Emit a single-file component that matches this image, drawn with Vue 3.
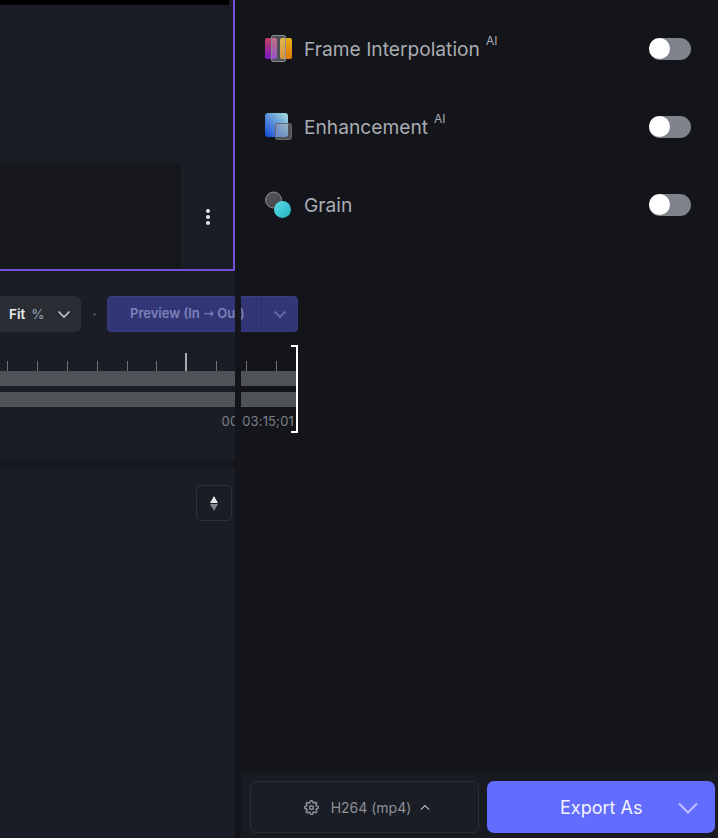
<script setup>
const ticks = [7, 37, 67, 97, 127, 156, 185, 216, 246, 276]
const rows = [
  { id: 'frame', label: 'Frame Interpolation', ai: true },
  { id: 'enh', label: 'Enhancement', ai: true },
  { id: 'grain', label: 'Grain', ai: false }
]
</script>

<template>
  <div class="app">
    <section class="left">
      <div class="viewer">
        <div class="black-bar"></div>
        <div class="dark-box"></div>
        <div class="dots"><i></i><i></i><i></i></div>
      </div>
      <div class="toolbar">
        <div class="fit"><b>Fit</b><span class="pct">%</span>
          <svg width="14" height="9" viewBox="0 0 14 9"><path d="M1.5 1.5 7 7l5.5-5.5" fill="none" stroke="#c4c7cc" stroke-width="1.6"/></svg>
        </div>
        <span class="sep"></span>
        <div class="preview">
          <span class="preview-label">Preview (In <span class="arrow">→</span> Out)</span>
          <span class="preview-caret">
            <svg width="14" height="9" viewBox="0 0 14 9"><path d="M1.5 1.5 7 7l5.5-5.5" fill="none" stroke="#6a72a8" stroke-width="1.6"/></svg>
          </span>
        </div>
      </div>
      <div class="timeline">
        <div class="ruler">
          <i v-for="(t, n) in ticks" :key="t" :class="{ now: n === 6 }" :style="{ left: t + 'px' }"></i>
        </div>
        <div class="track"></div>
        <div class="track"></div>
        <div class="time">00:03:15;01</div>
        <div class="bracket"></div>
      </div>
      <div class="rule"></div>
      <div class="lower">
        <button class="sort">
          <svg width="8" height="15" viewBox="0 0 8 15"><path d="M4 0 8 7H0z" fill="#e6e7e9"/><path d="M4 15 0 8h8z" fill="#7f838a"/></svg>
        </button>
      </div>
    </section>

    <div class="splitter"></div>

    <aside class="right">
      <div class="rows">
        <div v-for="r in rows" :key="r.id" class="row">
          <svg v-if="r.id === 'frame'" class="ico" width="28" height="28" viewBox="0 0 28 28">
            <defs>
              <linearGradient id="fa" x1="0" y1="0" x2="0" y2="1"><stop offset="0" stop-color="#c2405f"/><stop offset="1" stop-color="#7a18c8"/></linearGradient>
              <linearGradient id="fb" x1="0" y1="0" x2="0" y2="1"><stop offset="0" stop-color="#e8b010"/><stop offset="1" stop-color="#e07a08"/></linearGradient>
            </defs>
            <rect x="0" y="3" width="12" height="21" rx="2" fill="url(#fa)"/>
            <rect x="15" y="3" width="12" height="21" rx="2" fill="url(#fb)"/>
            <rect x="6.500" y="0.500" width="14" height="26" rx="1.500" fill="#c9c9c9" fill-opacity=".32" stroke="#8a8a8e" stroke-width="1"/>
          </svg>
          <svg v-else-if="r.id === 'enh'" class="ico" width="28" height="28" viewBox="0 0 28 28">
            <defs>
              <linearGradient id="ea" x1="0" y1="1" x2="1" y2="0"><stop offset="0" stop-color="#0f46d8"/><stop offset="1" stop-color="#a8e0da"/></linearGradient>
            </defs>
            <rect x="0" y="0" width="23" height="24" rx="3" fill="url(#ea)"/>
            <rect x="10.500" y="10.500" width="16" height="16" rx="2" fill="#a6a6ac" fill-opacity=".42" stroke="#66666b" stroke-width="1"/>
          </svg>
          <svg v-else class="ico" width="28" height="28" viewBox="0 0 28 28">
            <defs>
              <linearGradient id="ga" x1="0" y1="0" x2="1" y2="1"><stop offset="0" stop-color="#5a5b60"/><stop offset="1" stop-color="#3f4045"/></linearGradient>
              <linearGradient id="gb" x1="0" y1="0" x2="1" y2="1"><stop offset="0" stop-color="#5cdde6"/><stop offset="1" stop-color="#23b2c4"/></linearGradient>
            </defs>
            <circle cx="8.500" cy="9" r="8" fill="url(#ga)" stroke="#85858a" stroke-width="1"/>
            <circle cx="17.500" cy="18.500" r="8.500" fill="url(#gb)"/>
          </svg>
          <span class="label">{{ r.label }}</span>
          <sup v-if="r.ai" class="ai">AI</sup>
          <span class="toggle"><span class="knob"></span></span>
        </div>
      </div>
      <footer class="footer">
        <button class="codec">
          <svg class="gear" width="15" height="15" viewBox="0 0 24 24" fill="none" stroke="#8c8f95" stroke-width="2.400" stroke-linejoin="round"><circle cx="12" cy="12" r="3"/><path d="M19.400 15a1.650 1.650 0 0 0 .33 1.820l.06.06a2 2 0 1 1-2.830 2.830l-.06-.06a1.650 1.650 0 0 0-2.820 1.170V21a2 2 0 1 1-4 0v-.09a1.650 1.650 0 0 0-2.820-1.120l-.06.06a2 2 0 1 1-2.830-2.830l.06-.06a1.650 1.650 0 0 0-1.170-2.820H3a2 2 0 1 1 0-4h.09a1.650 1.650 0 0 0 1.120-2.820l-.06-.06a2 2 0 1 1 2.830-2.830l.06.06a1.650 1.650 0 0 0 2.820-1.170V3a2 2 0 1 1 4 0v.09a1.650 1.650 0 0 0 2.820 1.120l.06-.06a2 2 0 1 1 2.830 2.830l-.06.06a1.650 1.650 0 0 0 1.170 2.820H21a2 2 0 1 1 0 4h-.09a1.650 1.650 0 0 0-1.510 1z"/></svg>
          <span class="codec-label">H264 (mp4)</span>
          <svg class="codec-caret" width="10" height="7" viewBox="0 0 10 7"><path d="M.8 5.700 5 1.500l4.200 4.200" fill="none" stroke="#b4b6ba" stroke-width="1.200"/></svg>
        </button>
        <button class="export">
          <span class="export-label">Export As</span>
          <svg class="export-caret" width="20" height="12" viewBox="0 0 20 12"><path d="M1 1.500 10 10.500 19 1.500" fill="none" stroke="#bcc2ff" stroke-width="2"/></svg>
        </button>
      </footer>
    </aside>
  </div>
</template>

<style>
html, body { margin: 0; background: #13151a; }
</style>

<style scoped>
.app { display: flex; width: 718px; height: 838px; overflow: hidden; background: #13151a; font-family: Inter, "Liberation Sans", sans-serif; }
.left { width: 235px; flex: none; display: flex; flex-direction: column; background: #1a1d25; position: relative; }
.viewer { height: 271px; box-sizing: border-box; flex: none; position: relative; border-right: 2px solid #7350d6; border-bottom: 2px solid #7350d6; }
.black-bar { position: absolute; left: 0; top: 0; width: 229px; height: 5px; background: #000; }
.dark-box { position: absolute; left: 0; top: 163px; width: 181px; height: 106px; background: #15171b; }
.dots { position: absolute; left: 206px; top: 209px; display: flex; flex-direction: column; gap: 2px; }
.dots i { display: block; width: 4px; height: 4px; border-radius: 50%; background: #e8e8ea; }
.toolbar { width: 298px; height: 36px; margin-top: 25px; display: flex; align-items: center; flex: none; position: relative; }
.fit { width: 81px; height: 36px; box-sizing: border-box; flex: none; background: #2a2d33; border-radius: 0 6px 6px 0; display: flex; align-items: center; padding-left: 9px; font-size: 13.500px; }
.fit b { color: #eceded; font-weight: 600; }
.pct { color: #8d9aa8; margin-left: 6px; font-weight: 500; }
.fit svg { margin-left: 12px; }
.sep { width: 3px; height: 3px; border-radius: 50%; background: #44474e; margin-left: 12px; flex: none; }
.preview { margin-left: 11px; width: 191px; height: 36px; flex: none; display: flex; background: #323676; border-radius: 4px; box-sizing: border-box; border: 1px solid #393d80; }
.preview-label { width: 154px; box-sizing: border-box; padding-left: 22px; line-height: 32px; font-size: 13px; font-weight: 600; color: #7c82b8; white-space: nowrap; border-right: 1px solid #2b2f68; }
.arrow { font-family: "DejaVu Sans", sans-serif; font-weight: 400; }
.preview-caret { flex: 1; display: flex; align-items: center; justify-content: center; }
.timeline { width: 298px; height: 88px; margin-top: 13px; flex: none; position: relative; box-sizing: border-box; padding-top: 26px; }
.ruler { position: absolute; left: 0; top: 8px; width: 298px; height: 18px; }
.ruler i { position: absolute; bottom: 0; width: 1px; height: 10px; background: #6d7075; }
.ruler i.now { height: 18px; width: 2px; background: #a9abaf; }
.track { height: 15px; background: #4f5358; margin-bottom: 6px; width: 297px; }
.time { position: absolute; right: 4px; top: 67px; font-size: 13px; line-height: 18px; color: #7b8087; letter-spacing: .15px; }
.bracket { position: absolute; right: 0; top: 0; width: 7px; height: 88px; border: 2px solid #fff; border-left: 0; box-sizing: border-box; }
.rule { height: 6px; margin-top: 28px; background: #15171c; flex: none; }
.lower { flex: 1; position: relative; }
.sort { position: absolute; left: 196px; top: 18px; width: 36px; height: 36px; box-sizing: border-box; padding: 0; display: flex; align-items: center; justify-content: center; background: transparent; border: 1px solid #2e3138; border-radius: 5px; }
.splitter { width: 6px; flex: none; background: #13151a; position: relative; z-index: 2; }
.right { flex: 1; display: flex; flex-direction: column; min-width: 0; }
.rows { flex: 1; padding-top: 10px; }
.row { height: 78px; display: flex; align-items: center; padding-left: 24px; padding-right: 27px; }
.ico { flex: none; }
.label { margin-left: 11px; font-size: 19.200px; color: #a9acb2; }
.ai { font-size: 12px; line-height: 1; align-self: center; margin: -16px 0 0 6px; color: #a9acb2; }
.toggle { margin-left: auto; width: 42px; height: 22px; border-radius: 11px; background: #7f838b; position: relative; flex: none; margin-top: -1px; }
.knob { position: absolute; left: 0; top: 0; width: 21px; height: 21px; margin-top: .5px; border-radius: 50%; background: #fff; }
.footer { height: 67px; box-sizing: border-box; background: #181b21; display: flex; gap: 8px; padding: 10px 3px 5px 9px; flex: none; }
.codec { width: 229px; height: 52px; box-sizing: border-box; display: flex; align-items: center; justify-content: center; background: #1a1d24; border: 1px solid #2b2e34; border-radius: 6px; color: #8d9096; font: 14px Inter, "Liberation Sans", sans-serif; padding: 0 0 0 5px; }
.codec-label { margin-left: 12px; }
.codec-caret { margin-left: 9px; }
.export { width: 228px; height: 52px; position: relative; background: #626cff; border: 0; border-radius: 7px; color: #f3f4ff; font: 18px Inter, "Liberation Sans", sans-serif; padding: 0; display: flex; align-items: center; }
.export-label { margin-left: 73px; }
.export-caret { position: absolute; right: 17px; top: 21px; }
</style>
